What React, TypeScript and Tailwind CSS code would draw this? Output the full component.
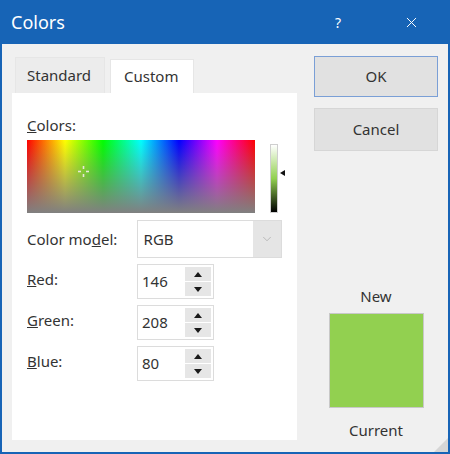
import { X, ChevronDown } from "lucide-react";

/**
 * Windows "Colors" dialog, Custom tab: spectrum + luminance bar, RGB spinners,
 * OK / Cancel and the New / Current swatch.
 */

function Arrow({ down }: { down?: boolean }) {
  return (
    <svg width="8" height="5" viewBox="0 0 8 5" className="block">
      <polygon points={down ? "0,0 8,0 4,5" : "0,5 8,5 4,0"} fill="#1a1a1a" />
    </svg>
  );
}

function Spinner({ value }: { value: number }) {
  return (
    <div className="flex h-[35px] w-[77px] border border-[#dcdcdc] bg-white">
      <span className="flex flex-1 items-center pl-[4px] text-[15px]">{value}</span>
      <div className="flex w-[28px] flex-col gap-px py-[2px] pr-[2px]">
        <div className="flex flex-1 items-center justify-center bg-[#e6e6e6]">
          <Arrow />
        </div>
        <div className="flex flex-1 items-center justify-center bg-[#e6e6e6]">
          <Arrow down />
        </div>
      </div>
    </div>
  );
}

function Row({ children, label }: { children: React.ReactNode; label: React.ReactNode }) {
  return (
    <div className="flex items-start">
      <span className="w-[110px] pt-[5px] leading-[20px]">{label}</span>
      {children}
    </div>
  );
}

export default function App() {
  return (
    <div className="flex h-[454px] w-[450px] flex-col bg-[#1764b6] font-['Noto_Sans',sans-serif] text-[15px] text-[#333]">
      {/* title bar */}
      <div className="flex h-[44px] shrink-0 items-center pl-[11px] text-white">
        <span className="text-[18px]">Colors</span>
        <span className="flex-1" />
        <span className="mr-[62px] text-[14px]">?</span>
        <X size={17} strokeWidth={1.4} className="mr-[30px]" />
      </div>

      <div className="relative mx-[2px] mb-[2px] flex flex-1 bg-[#f0f0f0]">
        {/* left: tabs + panel */}
        <div className="flex flex-col pl-[10px] pt-[13px]">
          <div className="flex h-[36px] items-end">
            <div className="ml-[3px] flex h-[36px] w-[90px] items-center border-x border-t border-[#e6e6e6] bg-[#ececec] pl-[11px]">
              Standard
            </div>
            <div className="ml-[5px] flex h-[34px] w-[84px] items-center border-x border-t border-[#e6e6e6] bg-white pl-[13px]">
              Custom
            </div>
          </div>

          <div className="flex h-[347px] w-[285px] flex-col bg-white px-[15px] pt-[22px]">
            <span className="leading-[20px]">
              <u>C</u>olors:
            </span>

            <div className="mt-[5px] flex items-start">
              <div className="relative h-[73px] w-[228px] bg-[linear-gradient(to_right,#ff0000,#ffff00,#00ff00,#00ffff,#0000ff,#ff00ff,#ff0000)]">
                <div className="absolute inset-0 bg-[linear-gradient(to_bottom,rgba(128,128,128,0),#808080)]" />
                <svg width="11" height="11" viewBox="0 0 11 11" className="absolute left-[51px] top-[26px]">
                  <g stroke="#e8e8d8" strokeWidth="1.6">
                    <line x1="5.5" y1="0" x2="5.5" y2="3" />
                    <line x1="5.5" y1="8" x2="5.5" y2="11" />
                    <line x1="0" y1="5.5" x2="3" y2="5.5" />
                    <line x1="8" y1="5.5" x2="11" y2="5.5" />
                  </g>
                </svg>
              </div>
              <div className="relative ml-[15px] mt-[4px] h-[69px] w-[8px] border border-[#cfcfcf] bg-[linear-gradient(to_bottom,#ffffff,#92d050_50%,#000000)]">
                <svg width="5" height="6" viewBox="0 0 5 6" className="absolute left-[9px] top-[25px]">
                  <polygon points="0,3 5,0 5,6" fill="#111" />
                </svg>
              </div>
            </div>

            <div className="mt-[7px] flex items-center">
              <span className="w-[110px]">
                Color mo<u>d</u>el:
              </span>
              <div className="flex h-[38px] w-[146px] border border-[#dcdcdc] bg-white">
                <span className="flex flex-1 items-center pl-[6px]">RGB</span>
                <span className="flex w-[28px] items-center justify-center bg-[#e5e5e5]">
                  <ChevronDown size={14} strokeWidth={1} className="text-[#9a9a9a]" />
                </span>
              </div>
            </div>

            <div className="mt-[6px] flex flex-col gap-[6px]">
              <Row label={<><u>R</u>ed:</>}>
                <Spinner value={146} />
              </Row>
              <Row label={<><u>G</u>reen:</>}>
                <Spinner value={208} />
              </Row>
              <Row label={<><u>B</u>lue:</>}>
                <Spinner value={80} />
              </Row>
            </div>
          </div>
        </div>

        {/* right: buttons + preview */}
        <div className="ml-[17px] flex w-[124px] flex-col items-center pt-[12px]">
          <button className="h-[41px] w-full border border-[#7a9fd6] bg-[#e1e1e1] text-[15px]">OK</button>
          <button className="mt-[11px] h-[43px] w-full border border-[#d6d6d6] bg-[#e1e1e1] text-[15px]">
            Cancel
          </button>
          <span className="mt-[135px] leading-[20px]">New</span>
          <div className="mt-[7px] h-[95px] w-[95px] border border-[#c8c8c8] bg-[#92d050]" />
          <span className="mt-[12px] leading-[20px]">Current</span>
        </div>

        {/* resize grip */}
        <svg width="14" height="14" viewBox="0 0 14 14" className="absolute bottom-0 right-0">
          <polygon points="14,0 14,14 0,14" fill="#d6d6d6" />
        </svg>
      </div>
    </div>
  );
}
